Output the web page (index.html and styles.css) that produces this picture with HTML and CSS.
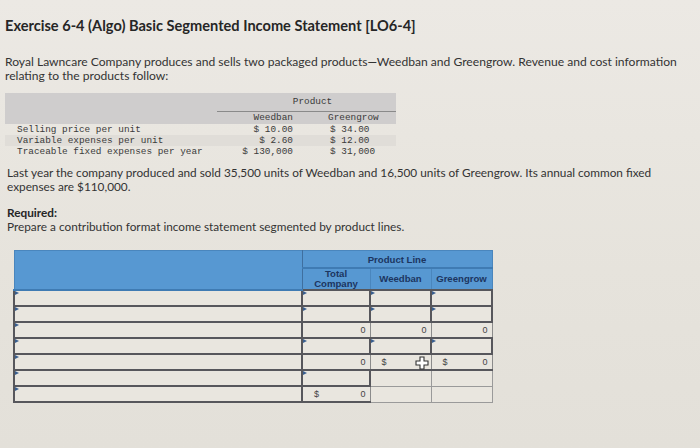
FILE: index.html
```html
<!DOCTYPE html>
<html>
<head>
<meta charset="utf-8">
<link rel="stylesheet" href="styles.css">
</head>
<body>
<div class="page">
  <h1 class="title">Exercise 6-4 (Algo) Basic Segmented Income Statement [LO6-4]</h1>
  <p class="intro">Royal Lawncare Company produces and sells two packaged products—Weedban and Greengrow. Revenue and cost information relating to the products follow:</p>

  <table class="data">
    <tr class="gh">
      <td class="lbl"></td>
      <td colspan="2" class="prod">Product</td>
    </tr>
    <tr class="gh">
      <td class="lbl"></td>
      <td class="c1">Weedban</td>
      <td class="c2">Greengrow</td>
    </tr>
    <tr>
      <td class="lbl">Selling price per unit</td>
      <td class="c1 v">$ 10.00</td>
      <td class="c2 v">$ 34.00</td>
    </tr>
    <tr class="shade">
      <td class="lbl">Variable expenses per unit</td>
      <td class="c1 v">$ 2.60</td>
      <td class="c2 v">$ 12.00</td>
    </tr>
    <tr>
      <td class="lbl">Traceable fixed expenses per year</td>
      <td class="c1 v">$ 130,000</td>
      <td class="c2 v">$ 31,000</td>
    </tr>
  </table>

  <p class="para">Last year the company produced and sold 35,500 units of Weedban and 16,500 units of Greengrow. Its annual common fixed expenses are $110,000.</p>

  <p class="req"><b>Required:</b><br>Prepare a contribution format income statement segmented by product lines.</p>

  <table class="ans">
    <colgroup>
      <col class="w0"><col class="w1"><col class="w2"><col class="w3">
    </colgroup>
    <tr class="h1">
      <th rowspan="2" class="blank"></th>
      <th colspan="3">Product Line</th>
    </tr>
    <tr class="h2">
      <th>Total<br>Company</th>
      <th>Weedban</th>
      <th>Greengrow</th>
    </tr>
    <tr>
      <td class="in"></td><td class="in"></td><td class="in"></td><td class="in"></td>
    </tr>
    <tr>
      <td class="in"></td><td class="in"></td><td class="in"></td><td class="in"></td>
    </tr>
    <tr>
      <td class="in"></td><td class="num">0</td><td class="num">0</td><td class="num">0</td>
    </tr>
    <tr>
      <td class="in"></td><td class="in"></td><td class="in"></td><td class="in"></td>
    </tr>
    <tr>
      <td class="in"></td>
      <td class="num">0</td>
      <td class="num cur"><span class="dol">$</span><svg class="move" width="14" height="14" viewBox="0 0 14 14"><path d="M5 1h4v4h4v4h-4v4h-4v-4h-4v-4h4z" fill="#fff" stroke="#333" stroke-width="1.1"/></svg></td>
      <td class="num"><span class="dol">$</span>0</td>
    </tr>
    <tr>
      <td class="in"></td><td class="in"></td><td class="plain"></td><td class="plain"></td>
    </tr>
    <tr>
      <td class="in"></td><td class="num"><span class="dol">$</span>0</td><td class="plain"></td><td class="plain"></td>
    </tr>
  </table>
</div>
</body>
</html>
```

FILE: styles.css
```css
html, body {
  margin: 0;
  padding: 0;
}
body {
  background: linear-gradient(#ece9e4, #e6e3dc 60%, #e3e0d9);
  color: #333;
  font-family: Lato, "Open Sans", sans-serif;
  width: 700px;
  height: 448px;
  overflow: hidden;
}
.page {
  padding: 17px 0 0 5px;
}
.title {
  margin: 0;
  font-size: 14.6px;
  font-weight: 700;
  color: #262626;
  line-height: 18px;
}
.intro {
  margin: 20px 10px 0 0;
  font-size: 12.1px;
  line-height: 14px;
  color: #333;
}
.data {
  margin: 10px 0 0 0;
  border-collapse: collapse;
  font-family: "Liberation Mono", "DejaVu Sans Mono", monospace;
  font-size: 9.4px;
  color: #3a3a3a;
  width: 391px;
}
.data td {
  padding: 0;
  height: 11px;
  line-height: 11px;
  white-space: pre;
}
.data .gh td {
  background: #cfcdcd;
  height: 12px;
  line-height: 12px;
}
.data .gh:first-child td {
  height: 16px;
  line-height: 18px;
}
.data .prod {
  text-align: center;
  padding-left: 12px;
  border-bottom: 1px solid #8a8a8a;
}
.data .lbl {
  width: 200px;
  padding-left: 12px;
}
.data .c1 {
  width: 76px;
  text-align: right;
  padding-right: 4px;
}
.data .c2 {
  text-align: left;
  padding-left: 31px;
}
.data .c2.v {
  padding-left: 33px;
}
.data .shade td {
  background: #e0ddd8;
}
.para {
  margin: 9px 20px 0 2px;
  font-size: 11.8px;
  line-height: 14px;
}
.req {
  margin: 12px 0 0 2px;
  font-size: 11.8px;
  line-height: 14px;
}
.req b {
  font-weight: 700;
  color: #262626;
}
.ans {
  margin: 16px 0 0 8px;
  border-collapse: collapse;
  table-layout: fixed;
  width: 478px;
  font-family: "Liberation Sans", Arial, sans-serif;
}
.w0 { width: 288px; }
.w1 { width: 68px; }
.w2 { width: 61px; }
.w3 { width: 61px; }
.ans th {
  background: #5798d2;
  color: #1c3560;
  font-size: 9.6px;
  font-weight: 700;
  padding: 0;
  line-height: 11px;
  border: 1px solid #4a86bd;
}
.ans .h1 th {
  height: 16px;
  border-bottom: 2px solid #3f7bb3;
}
.ans .h2 th {
  height: 19px;
  line-height: 10px;
}
.ans th.blank {
  border-right: 1px solid #3f6f9f;
}
.ans td {
  height: 14px;
  padding: 0 4px;
  background: #e9e6df;
  border: 2px solid #57575c;
  position: relative;
  font-size: 9px;
  color: #444;
}
.ans td.in::before {
  content: "";
  position: absolute;
  left: 0;
  top: 0;
  width: 0;
  height: 0;
  border-top: 2.5px solid transparent;
  border-bottom: 2.5px solid transparent;
  border-left: 4px solid #3a5f8f;
}
.ans td.num {
  text-align: right;
  border: 1px solid #8b8b8b;
  border-top: 2px solid #57575c;
  border-bottom: 2px solid #57575c;
}
.ans td.plain {
  border: 1px solid #9a9a9a;
}
.dol {
  float: left;
  margin-left: 7px;
}
.cur .move {
  position: absolute;
  right: 2px;
  top: 1px;
}
```
